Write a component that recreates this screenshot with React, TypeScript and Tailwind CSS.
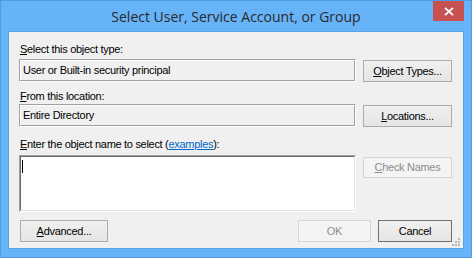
import React from "react";

function Btn({
  children,
  className = "",
  disabled = false,
  dark = false,
}: {
  children: React.ReactNode;
  className?: string;
  disabled?: boolean;
  dark?: boolean;
}) {
  const border = disabled
    ? "border-[#d5d5d5] bg-[#f4f4f4] text-[#8d8d8d]"
    : dark
    ? "border-[#707070] bg-gradient-to-b from-[#f0f0f0] to-[#e5e5e5] text-black"
    : "border-[#acacac] bg-gradient-to-b from-[#f0f0f0] to-[#e5e5e5] text-black";
  return (
    <div
      className={`flex items-center justify-center border ${border} shrink-0 ${className}`}
    >
      {children}
    </div>
  );
}

function ReadBox({ children }: { children: React.ReactNode }) {
  return (
    <div className="w-[337px] h-[23px] border border-t-[#a0a0a0] border-l-[#a0a0a0] border-b-[#ffffff] border-r-[#ffffff] shrink-0">
      <div className="w-full h-full border border-t-[#ffffff] border-l-[#ffffff] border-b-[#a0a0a0] border-r-[#a0a0a0] flex items-center pl-[2px]">
        {children}
      </div>
    </div>
  );
}

export default function App() {
  return (
    <div className="w-[472px] h-[258px] bg-[#66b3f8] border border-[#4d9de6] flex flex-col font-['Liberation_Sans',Arial,sans-serif] text-[11px] leading-[13px] tracking-[-0.3px] text-black overflow-hidden">
      <div className="relative h-[30px] shrink-0 flex items-center justify-center">
        <span className="font-['Open_Sans',sans-serif] text-[14px] tracking-normal leading-[20px] text-[#2a2a2a] mt-[1px]">
          Select User, Service Account, or Group
        </span>
        <div className="absolute right-[7px] top-0 w-[31px] h-[20px] bg-[#c75050] flex items-center justify-center">
          <svg width="10" height="9" viewBox="0 0 10 9">
            <path d="M1 0.8 L9 8.2 M9 0.8 L1 8.2" stroke="#ffffff" strokeWidth="1.8" />
          </svg>
        </div>
      </div>
      <div className="relative mx-[7px] h-[218px] shrink-0 bg-[#f0f0f0] border border-[#5aa2e8] pl-[10px] pr-[11px] flex flex-col">
        <div className="mt-[11px] pl-[1px]">
          <span className="underline">S</span>elect this object type:
        </div>
        <div className="mt-[3px] flex items-start gap-[7px]">
          <ReadBox>User or Built-in security principal</ReadBox>
          <Btn className="w-[89px] h-[22px] mt-[1px]">
            <span>
              <span className="underline">O</span>bject Types...
            </span>
          </Btn>
        </div>
        <div className="mt-[8px] pl-[1px]">
          <span className="underline">F</span>rom this location:
        </div>
        <div className="mt-[1px] flex items-start gap-[7px]">
          <ReadBox>Entire Directory</ReadBox>
          <Btn className="w-[89px] h-[22px] mt-[1px]">
            <span>
              <span className="underline">L</span>ocations...
            </span>
          </Btn>
        </div>
        <div className="mt-[11px] pl-[1px]">
          <span className="underline">E</span>nter the object name to select (
          <span className="text-[#0066cc] underline">examples</span>):
        </div>
        <div className="mt-[4px] flex items-start gap-[7px]">
          <div className="w-[337px] h-[57px] border border-t-[#a0a0a0] border-l-[#a0a0a0] border-b-[#ffffff] border-r-[#ffffff] shrink-0">
            <div className="w-full h-full border border-t-[#696969] border-l-[#696969] border-b-[#e3e3e3] border-r-[#e3e3e3] bg-white pl-[1px] pt-[3px]">
              <div className="w-[1px] h-[13px] bg-black" />
            </div>
          </div>
          <Btn disabled className="w-[89px] h-[21px] mt-[2px]">
            <span>
              <span className="underline">C</span>heck Names
            </span>
          </Btn>
        </div>
        <div className="mt-[8px] flex items-start">
          <Btn className="w-[88px] h-[22px] ml-[1px]">
            <span>
              <span className="underline">A</span>dvanced...
            </span>
          </Btn>
          <div className="flex-1" />
          <Btn disabled className="w-[73px] h-[22px]">
            OK
          </Btn>
          <Btn dark className="w-[74px] h-[22px] ml-[7px]">
            Cancel
          </Btn>
        </div>
        <svg
          className="absolute right-[2px] bottom-[1px]"
          width="10"
          height="10"
          viewBox="0 0 10 10"
        >
          <rect x="7" y="1" width="2" height="2" fill="#b8b8b8" />
          <rect x="4" y="4" width="2" height="2" fill="#b8b8b8" />
          <rect x="7" y="4" width="2" height="2" fill="#b8b8b8" />
          <rect x="1" y="7" width="2" height="2" fill="#b8b8b8" />
          <rect x="4" y="7" width="2" height="2" fill="#b8b8b8" />
          <rect x="7" y="7" width="2" height="2" fill="#b8b8b8" />
        </svg>
      </div>
    </div>
  );
}
